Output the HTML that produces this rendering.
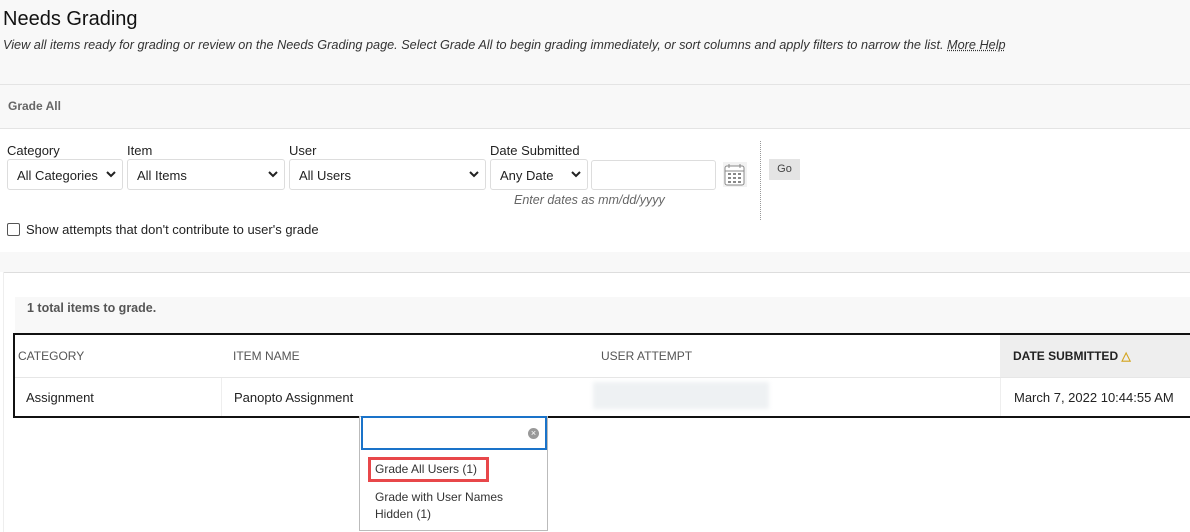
<!DOCTYPE html>
<html><head><style>
*{box-sizing:border-box;margin:0;padding:0}
body{width:1190px;height:532px;overflow:hidden;background:#fff;font-family:"Liberation Sans",sans-serif;color:#222;position:relative;font-size:13px}
.a{position:absolute}
.sel{position:absolute;height:31px;top:159px;border:1px solid #ddd;border-radius:3px;background:#fff;font-size:13px;padding:8px 0 0 9px;color:#222}
.sel svg{position:absolute;right:6px;top:11px}
.lbl{position:absolute;top:143px;font-size:13px;color:#222}
</style></head><body>
<div class="a" style="left:0;top:0;width:1190px;height:129px;background:#f8f8f8;border-bottom:1px solid #e4e4e4"></div>
<div class="a" style="left:0;top:84px;width:1190px;height:1px;background:#e4e4e4"></div>
<div class="a" style="left:3px;top:8px;font-size:20px;color:#111">Needs Grading</div>
<div class="a" style="left:3px;top:38px;font-size:12.7px;font-style:italic;color:#333;white-space:nowrap">View all items ready for grading or review on the Needs Grading page. Select Grade All to begin grading immediately, or sort columns and apply filters to narrow the list. <span style="text-decoration:underline dotted">More Help</span></div>
<div class="a" style="left:8px;top:99px;font-size:12px;font-weight:bold;color:#666">Grade All</div>

<div class="lbl" style="left:7px">Category</div>
<div class="lbl" style="left:127px">Item</div>
<div class="lbl" style="left:289px">User</div>
<div class="lbl" style="left:490px">Date Submitted</div>
<div class="sel" style="left:7px;width:116px">All Categories<svg width="10" height="7"><path d="M1 1L5 5L9 1" stroke="#222" stroke-width="2" fill="none"/></svg></div>
<div class="sel" style="left:127px;width:158px">All Items<svg width="10" height="7"><path d="M1 1L5 5L9 1" stroke="#222" stroke-width="2" fill="none"/></svg></div>
<div class="sel" style="left:289px;width:197px">All Users<svg width="10" height="7"><path d="M1 1L5 5L9 1" stroke="#222" stroke-width="2" fill="none"/></svg></div>
<div class="sel" style="left:490px;width:98px">Any Date<svg width="10" height="7"><path d="M1 1L5 5L9 1" stroke="#222" stroke-width="2" fill="none"/></svg></div>
<div class="a" style="left:591px;top:160px;width:125px;height:30px;border:1px solid #ddd;border-radius:3px;background:#fff"></div>
<svg class="a" style="left:722px;top:161px" width="26" height="27"><rect x="1" y="1" width="24" height="25" fill="#f2f2f2"/><rect x="3" y="5" width="19" height="19" rx="2" fill="#fff" stroke="#888"/><line x1="3" y1="10" x2="22" y2="10" stroke="#888"/><g fill="#888"><rect x="6" y="12" width="3" height="2"/><rect x="11" y="12" width="3" height="2"/><rect x="16" y="12" width="3" height="2"/><rect x="6" y="16" width="3" height="2"/><rect x="11" y="16" width="3" height="2"/><rect x="16" y="16" width="3" height="2"/><rect x="6" y="20" width="3" height="2"/><rect x="11" y="20" width="3" height="2"/><rect x="16" y="20" width="3" height="2"/></g><line x1="7" y1="3" x2="7" y2="7" stroke="#888"/><line x1="18" y1="3" x2="18" y2="7" stroke="#888"/></svg>
<div class="a" style="left:514px;top:193px;font-size:12.5px;font-style:italic;color:#666">Enter dates as mm/dd/yyyy</div>
<div class="a" style="left:760px;top:141px;height:79px;border-left:1px dotted #999"></div>
<div class="a" style="left:769px;top:159px;width:31px;height:21px;background:#e4e4e4;font-size:11px;color:#444;text-align:center;padding-top:4px">Go</div>
<div class="a" style="left:7px;top:223px;width:13px;height:13px;border:1px solid #555;border-radius:2px;background:#fff"></div>
<div class="a" style="left:26px;top:222px;font-size:13px">Show attempts that don't contribute to user's grade</div>

<div class="a" style="left:0;top:252px;width:1190px;height:20px;background:#f8f8f8"></div>
<div class="a" style="left:3px;top:272px;width:1187px;height:1px;background:#ddd"></div>
<div class="a" style="left:3px;top:272px;width:1px;height:260px;background:#eee"></div>
<div class="a" style="left:15px;top:297px;width:1175px;height:36px;background:#f8f8f8"></div>
<div class="a" style="left:27px;top:301px;font-size:12.5px;font-weight:bold;color:#555">1 total items to grade.</div>

<div class="a" style="left:13px;top:333px;width:1180px;height:85px;border:2px solid #111;border-right:none"></div>
<div class="a" style="left:1000px;top:335px;width:190px;height:42px;background:#eee"></div>
<div class="a" style="left:15px;top:377px;width:1175px;height:1px;background:#e6e6e6"></div>
<div class="a" style="left:221px;top:378px;width:1px;height:38px;background:#eee"></div>
<div class="a" style="left:1000px;top:378px;width:1px;height:38px;background:#eee"></div>
<div class="a" style="left:18px;top:349px;font-size:12px;color:#555">CATEGORY</div>
<div class="a" style="left:233px;top:349px;font-size:12px;color:#555">ITEM NAME</div>
<div class="a" style="left:601px;top:349px;font-size:12px;color:#555">USER ATTEMPT</div>
<div class="a" style="left:1013px;top:349px;font-size:12px;font-weight:bold;color:#222">DATE SUBMITTED <span style="color:#d4a520">△</span></div>
<div class="a" style="left:26px;top:390px;font-size:13px">Assignment</div>
<div class="a" style="left:234px;top:390px;font-size:13px">Panopto Assignment</div>
<div class="a" style="left:593px;top:382px;width:176px;height:27px;background:#eef1f3;filter:blur(2px)"></div>
<div class="a" style="left:1014px;top:390px;font-size:13px">March 7, 2022 10:44:55 AM</div>

<div class="a" style="left:359px;top:416px;width:189px;height:115px;border:1px solid #bbb;background:#fff"></div>
<div class="a" style="left:361px;top:416px;width:186px;height:34px;border:2px solid #1a73c9"></div>
<div class="a" style="left:528px;top:428px;width:11px;height:11px;border-radius:50%;background:#999;color:#fff;font-size:9px;line-height:11px;text-align:center">×</div>
<div class="a" style="left:368px;top:457px;width:121px;height:25px;border:3px solid #e8474a"></div>
<div class="a" style="left:375px;top:462px;font-size:12px;color:#333">Grade All Users (1)</div>
<div class="a" style="left:375px;top:489px;font-size:12px;color:#333;line-height:17px">Grade with User Names<br>Hidden (1)</div>
</body></html>
